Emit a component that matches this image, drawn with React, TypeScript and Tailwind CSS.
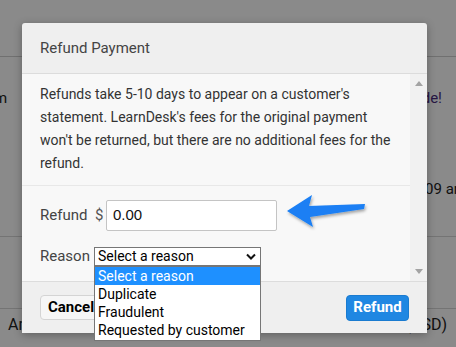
import React from "react";

function Arrow() {
  return (
    <svg width="84" height="36" viewBox="0 0 84 36" className="ml-[8px] mt-[-4px]">
      <defs>
        <filter id="sh" x="-20%" y="-30%" width="140%" height="160%">
          <feDropShadow dx="1" dy="2" stdDeviation="1.5" floodColor="#000" floodOpacity="0.35" />
        </filter>
      </defs>
      <path
        d="M2 16 L27 0 L24 11 L80 9 L79 14 L25 22 L28 32 Z"
        fill="#1a7ff4"
        filter="url(#sh)"
      />
    </svg>
  );
}

export default function App() {
  const options = ["Select a reason", "Duplicate", "Fraudulent", "Requested by customer"];
  return (
    <div className="relative w-[456px] h-[347px] overflow-hidden bg-white font-['Roboto',sans-serif]">
      {/* page behind the dialog */}
      <div className="flex flex-col text-[15px] text-[#222] whitespace-nowrap">
        <div className="h-[57px] border-b border-[#cfcfcf]" />
        <div className="h-[60px] flex items-end justify-between pb-[8px]">
          <span className="ml-[-6px]">m</span>
          <span className="text-[#4b2c7f] mr-[14px]">Upgrade!</span>
        </div>
        <div className="h-[90px] flex items-end justify-end pb-[7px]">
          <span className="shrink-0 mr-[-11px]">2:09 am</span>
        </div>
        <div className="h-[30px] border-b border-[#d6d6d6]" />
        <div className="h-[72px] border-b border-[#d6d6d6]" />
        <div className="flex justify-between pt-[4px] text-[16px]">
          <span className="ml-[8px]">Amount Paid (USD)</span>
          <span className="mr-[9px]">Amount Paid (USD)</span>
        </div>
      </div>

      {/* backdrop */}
      <div className="absolute inset-0 bg-black/[0.46]" />

      {/* dialog */}
      <div className="absolute left-[22px] top-[23px] w-[405px] h-[310px] flex flex-col rounded-t-[3px] shadow-[0_2px_8px_rgba(0,0,0,0.3)]">
        <div className="h-[51px] shrink-0 bg-[#efefef] border-b border-[#dcdcdc] px-[18px] flex items-center text-[15px] text-[#444] rounded-t-[3px]">
          Refund Payment
        </div>
        <div className="h-[207px] shrink-0 flex bg-[#f8f8f8]">
          <div className="flex-1 flex flex-col">
            <div className="px-[18px] pt-[9px] pb-[10px] text-[14px] leading-[23px] text-[#333] border-b border-[#e8e8e8] whitespace-nowrap">
              Refunds take 5-10 days to appear on a customer's
              <br />
              statement. LearnDesk's fees for the original payment
              <br />
              won't be returned, but there are no additional fees for the
              <br />
              refund.
            </div>
            <div className="px-[18px] pt-[13px] flex flex-col gap-[14px]">
              <div className="flex items-center">
                <span className="text-[15px] text-[#444] w-[55px]">Refund</span>
                <span className="text-[15px] text-[#555] w-[11px]">$</span>
                <div className="w-[171px] h-[31px] border border-[#c4c4c4] rounded-[2px] bg-white flex items-center px-[6px] text-[15px] text-[#111] font-['Liberation_Sans',sans-serif]">
                  0.00
                </div>
                <Arrow />
              </div>
              <div className="flex items-center">
                <span className="text-[15px] text-[#444] w-[54px]">Reason</span>
                <div className="relative w-[167px] h-[19px] border border-[#767676] bg-white flex items-center justify-between pl-[3px] pr-[4px] text-[14px] text-black">
                  <span>Select a reason</span>
                  <svg width="10" height="7" viewBox="0 0 10 7">
                    <path d="M1 1.5 L5 5.5 L9 1.5" fill="none" stroke="#111" strokeWidth="2" />
                  </svg>
                  <div className="absolute left-[-1px] top-[18px] w-[167px] border border-[#767676] bg-white z-10 flex flex-col pb-[1px]">
                    {options.map((o, i) => (
                      <div
                        key={o}
                        className={`h-[18px] leading-[18px] pl-[3px] text-[14px] ${
                          i === 0 ? "bg-[#1e90ff] text-white" : "text-black"
                        }`}
                      >
                        {o}
                      </div>
                    ))}
                  </div>
                </div>
              </div>
            </div>
          </div>
          <div className="w-[17px] bg-[#f1f1f1] flex flex-col items-center justify-between py-[7px]">
            <svg width="8" height="5" viewBox="0 0 8 5">
              <path d="M0 5 L4 0 L8 5 Z" fill="#a3a3a3" />
            </svg>
            <svg width="8" height="5" viewBox="0 0 8 5">
              <path d="M0 0 L4 5 L8 0 Z" fill="#a3a3a3" />
            </svg>
          </div>
        </div>
        <div className="flex-1 bg-[#efefef] border-t border-[#dcdcdc] flex items-center justify-between px-[18px]">
          <button className="h-[25px] px-[7px] rounded-[4px] border border-[#d4d4d4] bg-[#f6f6f6] text-[15px] font-bold text-black">
            Cancel
          </button>
          <button className="h-[26px] w-[63px] rounded-[4px] bg-[#1f87e2] border border-[#1a7bd0] text-[15px] font-bold text-white">
            Refund
          </button>
        </div>
      </div>
    </div>
  );
}
